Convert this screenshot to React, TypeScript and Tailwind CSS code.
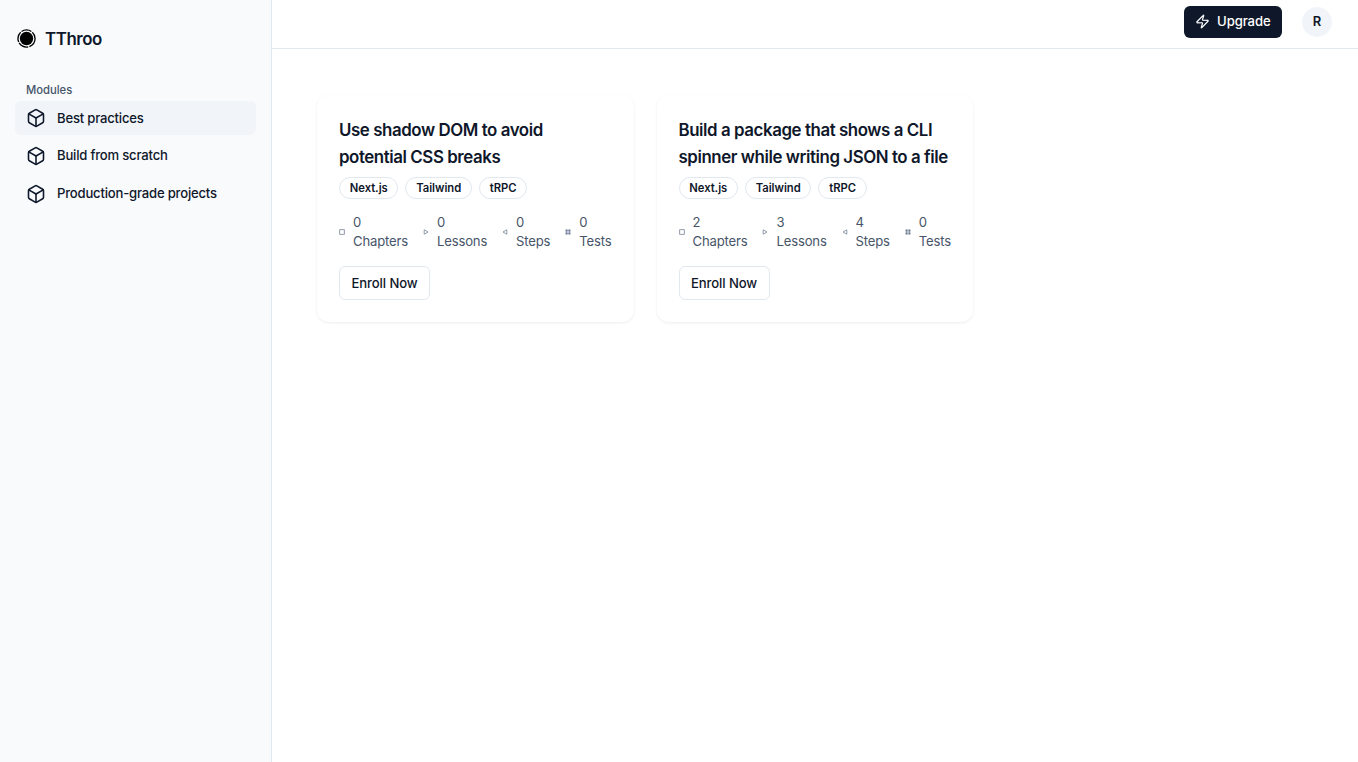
import { Box, Zap } from "lucide-react";

const modules = [
  { label: "Best practices", active: true },
  { label: "Build from scratch", active: false },
  { label: "Production-grade projects", active: false },
];

const courses = [
  {
    title: "Use shadow DOM to avoid potential CSS breaks",
    counts: [0, 0, 0, 0],
  },
  {
    title: "Build a package that shows a CLI spinner while writing JSON to a file",
    counts: [2, 3, 4, 0],
  },
];

const tags = ["Next.js", "Tailwind", "tRPC"];

function StatIcon({ kind }: { kind: number }) {
  return (
    <svg viewBox="0 0 6 6" className="h-[6px] w-[6px] shrink-0" fill="none" stroke="#64748b" strokeWidth="0.7">
      {kind === 0 && <rect x="0.6" y="0.6" width="4.8" height="4.8" rx="0.2" />}
      {kind === 1 && <path d="M1.2 0.8 5 3 1.2 5.2Z" />}
      {kind === 2 && <path d="M4.8 0.8 1 3 4.8 5.2Z" />}
      {kind === 3 && (
        <g fill="#64748b" stroke="none">
          <rect x="0.6" y="0.5" width="2" height="2.2" />
          <rect x="3.4" y="0.5" width="2" height="2.2" />
          <rect x="0.6" y="3.3" width="2" height="2.2" />
          <rect x="3.4" y="3.3" width="2" height="2.2" />
        </g>
      )}
    </svg>
  );
}

const statLabels = ["Chapters", "Lessons", "Steps", "Tests"];

function CourseCard({ title, counts }: { title: string; counts: number[] }) {
  return (
    <div className="rounded-xl bg-white px-[22px] pb-[22px] pt-[22px] shadow-[0_1px_3px_rgba(15,23,42,0.08)]">
      <h2 className="text-[16.875px] font-semibold leading-[27px] tracking-[-0.025em] text-[#0f172a]">{title}</h2>
      <div className="mt-[6px] flex gap-[7px]">
        {tags.map((tag) => (
          <span
            key={tag}
            className="rounded-full border border-[#e2e8f0] px-[9.8px] py-[2px] text-[11.25px] font-semibold leading-[16px] tracking-[-0.05px] text-[#0f172a]"
          >
            {tag}
          </span>
        ))}
      </div>
      <div className="mt-[14px] flex justify-between">
        {statLabels.map((label, i) => (
          <div key={label} className="flex items-center gap-[8px]">
            <StatIcon kind={i} />
            <div className="text-[13.1px] leading-[19px] tracking-[-0.15px] text-[#475569]">
              <div>{counts[i]}</div>
              <div>{label}</div>
            </div>
          </div>
        ))}
      </div>
      <button className="mt-[15px] h-[34px] rounded-md border border-[#e2e8f0] bg-white px-[11.5px] text-[13.1px] font-medium tracking-[-0.1px] text-[#0f172a]">
        <span className="relative top-px">Enroll Now</span>
      </button>
    </div>
  );
}

export default function App() {
  return (
    <div className="flex h-[762px] bg-white font-['Inter',sans-serif]">
      <aside className="flex w-[272px] shrink-0 flex-col border-r border-[#e2e8f0] bg-[#f8fafc] px-[15px]">
        <div className="flex h-[77px] items-center gap-[9px] pl-[2px]">
          <svg viewBox="0 0 20 20" className="h-[19px] w-[19px]">
            <circle cx="10" cy="10" r="9" fill="none" stroke="#000" strokeWidth="1.4" strokeDasharray="11 1.2" />
            <circle cx="10" cy="10" r="7" fill="#000" />
          </svg>
          <span className="pt-[2px] text-[16.875px] font-semibold tracking-[-0.025em] text-[#0f172a]">TThroo</span>
        </div>
        <p className="mt-[6px] pl-[11px] text-[11.25px] font-medium leading-[14px] text-[#475569]">Modules</p>
        <nav className="mt-[4px] flex flex-col gap-[3.75px]">
          {modules.map((item) => (
            <a
              key={item.label}
              className={
                item.active
                  ? "flex h-[34px] items-center gap-[11px] rounded-md bg-[#f1f5f9] pl-[11px] text-[13.1px] font-medium tracking-[-0.2px] text-[#0f172a]"
                  : "flex h-[34px] items-center gap-[11px] rounded-md pl-[11px] text-[13.1px] font-medium tracking-[-0.2px] text-[#0f172a]"
              }
            >
              <Box className="h-[20px] w-[20px]" strokeWidth={1.9} />
              <span className="pt-px">{item.label}</span>
            </a>
          ))}
        </nav>
      </aside>
      <div className="flex min-w-0 flex-1 flex-col">
        <header className="flex h-[49px] items-center justify-end gap-[20px] border-b border-[#e2e8f0] pr-[26px]">
          <button className="mt-[-5px] flex h-[32px] items-center gap-[7px] rounded-md bg-[#0f172a] pl-[11.5px] pr-[11.5px] text-[13.1px] font-medium tracking-[-0.1px] text-white">
            <Zap className="h-[15px] w-[15px]" strokeWidth={2} />
            <span className="pt-px">Upgrade</span>
          </button>
          <div className="mt-[-5px] flex h-[30px] w-[30px] items-center justify-center rounded-full bg-[#f1f5f9] pt-px text-[13px] font-semibold text-[#0f172a]">
            R
          </div>
        </header>
        <main className="grid grid-cols-[316.5px_316.5px] items-start gap-[23px] pl-[45px] pt-[46px]">
          {courses.map((course) => (
            <CourseCard key={course.title} {...course} />
          ))}
        </main>
      </div>
    </div>
  );
}
